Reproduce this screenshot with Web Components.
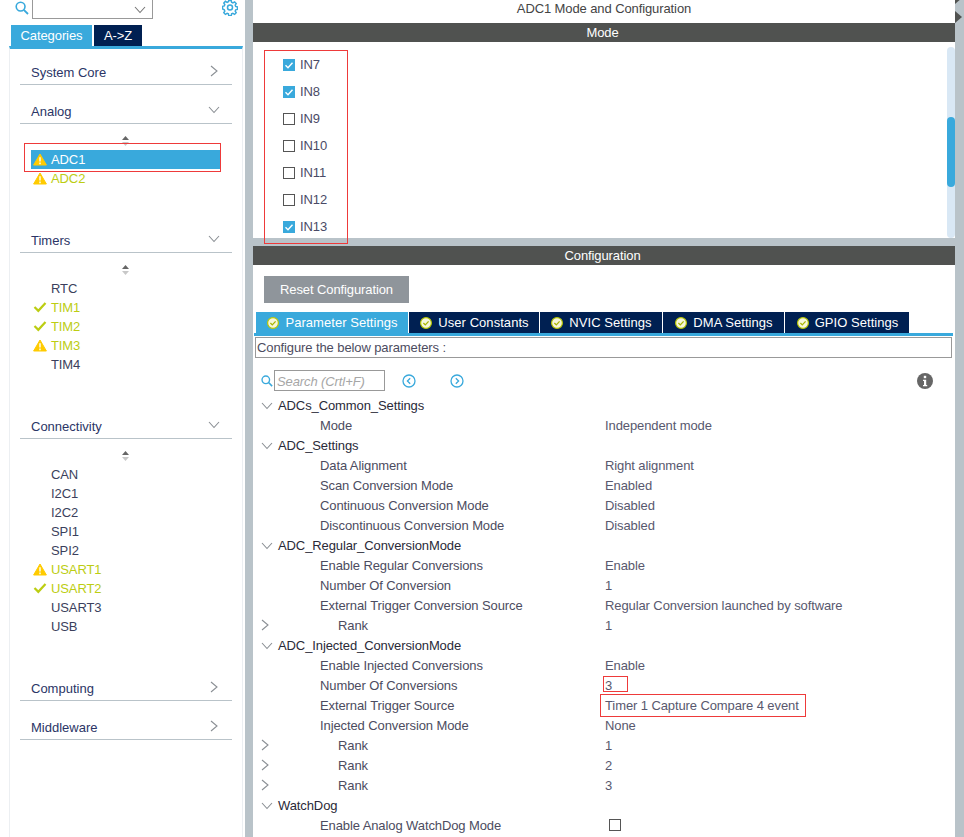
<!DOCTYPE html>
<html>
<head>
<meta charset="utf-8">
<title>ADC1 Mode and Configuration</title>
<style>
  html, body { margin: 0; height: 837px; overflow: hidden; background: #fff; }
  body { font: 13px/20px "Liberation Sans", Arial, sans-serif; letter-spacing: -0.1px; color: #444; }
</style>
</head>
<body>
<cube-app>
  <side-panel slot="side">
    <cat-header label="System Core"></cat-header>
    <cat-header label="Analog" open></cat-header>
    <cat-list>
      <periph-item state="warn" selected>ADC1</periph-item>
      <periph-item state="warn">ADC2</periph-item>
    </cat-list>
    <cat-header label="Timers" open></cat-header>
    <cat-list>
      <periph-item>RTC</periph-item>
      <periph-item state="ok">TIM1</periph-item>
      <periph-item state="ok">TIM2</periph-item>
      <periph-item state="warn">TIM3</periph-item>
      <periph-item>TIM4</periph-item>
    </cat-list>
    <cat-header label="Connectivity" open></cat-header>
    <cat-list>
      <periph-item>CAN</periph-item>
      <periph-item>I2C1</periph-item>
      <periph-item>I2C2</periph-item>
      <periph-item>SPI1</periph-item>
      <periph-item>SPI2</periph-item>
      <periph-item state="warn">USART1</periph-item>
      <periph-item state="ok">USART2</periph-item>
      <periph-item>USART3</periph-item>
      <periph-item>USB</periph-item>
    </cat-list>
    <cat-header label="Computing"></cat-header>
    <cat-header label="Middleware"></cat-header>
  </side-panel>

  <main-panel slot="main">
    <check-row slot="mode" checked>IN7</check-row>
    <check-row slot="mode" checked>IN8</check-row>
    <check-row slot="mode">IN9</check-row>
    <check-row slot="mode">IN10</check-row>
    <check-row slot="mode">IN11</check-row>
    <check-row slot="mode">IN12</check-row>
    <check-row slot="mode" checked>IN13</check-row>

    <tab-item slot="tabs" active width="152">Parameter Settings</tab-item>
    <tab-item slot="tabs" width="130">User Constants</tab-item>
    <tab-item slot="tabs" width="122">NVIC Settings</tab-item>
    <tab-item slot="tabs" width="121">DMA Settings</tab-item>
    <tab-item slot="tabs" width="124">GPIO Settings</tab-item>

    <param-row slot="params" kind="group" name="ADCs_Common_Settings"></param-row>
    <param-row slot="params" name="Mode" value="Independent mode"></param-row>
    <param-row slot="params" kind="group" name="ADC_Settings"></param-row>
    <param-row slot="params" name="Data Alignment" value="Right alignment"></param-row>
    <param-row slot="params" name="Scan Conversion Mode" value="Enabled"></param-row>
    <param-row slot="params" name="Continuous Conversion Mode" value="Disabled"></param-row>
    <param-row slot="params" name="Discontinuous Conversion Mode" value="Disabled"></param-row>
    <param-row slot="params" kind="group" name="ADC_Regular_ConversionMode"></param-row>
    <param-row slot="params" name="Enable Regular Conversions" value="Enable"></param-row>
    <param-row slot="params" name="Number Of Conversion" value="1"></param-row>
    <param-row slot="params" name="External Trigger Conversion Source" value="Regular Conversion launched by software"></param-row>
    <param-row slot="params" kind="rank" name="Rank" value="1"></param-row>
    <param-row slot="params" kind="group" name="ADC_Injected_ConversionMode"></param-row>
    <param-row slot="params" name="Enable Injected Conversions" value="Enable"></param-row>
    <param-row slot="params" name="Number Of Conversions" value="3"></param-row>
    <param-row slot="params" name="External Trigger Source" value="Timer 1 Capture Compare 4 event"></param-row>
    <param-row slot="params" name="Injected Conversion Mode" value="None"></param-row>
    <param-row slot="params" kind="rank" name="Rank" value="1"></param-row>
    <param-row slot="params" kind="rank" name="Rank" value="2"></param-row>
    <param-row slot="params" kind="rank" name="Rank" value="3"></param-row>
    <param-row slot="params" kind="group" name="WatchDog"></param-row>
    <param-row slot="params" name="Enable Analog WatchDog Mode" box></param-row>
  </main-panel>

  <!-- red boxes somebody drew on the screenshot -->
  <red-mark slot="marks" x="24" y="143" w="197" h="29"></red-mark>
  <red-mark slot="marks" x="264" y="50" w="84" h="194"></red-mark>
  <red-mark slot="marks" x="603" y="676" w="25" h="16"></red-mark>
  <red-mark slot="marks" x="600" y="694" w="206" h="23"></red-mark>
</cube-app>

<script>
const BLUE = '#39a9dc'
const NAVY = '#002052'
const LIME = '#bccd12'

const chevronRight = `<svg width="8" height="12" viewBox="0 0 8 12"><path d="M1 1l6 5-6 5" fill="none" stroke="#8a8f94" stroke-width="1.1"/></svg>`
const chevronDown = `<svg width="12" height="8" viewBox="0 0 12 8"><path d="M1 1l5 5.5L11 1" fill="none" stroke="#8a8f94" stroke-width="1.1"/></svg>`
const warnIcon = `<svg width="14" height="13" viewBox="0 0 14 13"><path d="M7 1L13.4 12H.6z" fill="#ffcb00" stroke="#ffcb00" stroke-width="1" stroke-linejoin="round"/><path d="M7 4.2v4.4M7 9.6v1.6" stroke="#fff" stroke-width="1.4"/></svg>`
const okIcon = `<svg width="14" height="12" viewBox="0 0 14 12"><path d="M1.5 6l3.8 3.8L12.5 2" fill="none" stroke="${LIME}" stroke-width="2.2"/></svg>`
const circleNav = dir => `<svg width="14" height="14" viewBox="0 0 14 14"><circle cx="7" cy="7" r="6" fill="none" stroke="${BLUE}" stroke-width="1.3"/><path d="${dir == 'l' ? 'M8.2 4.2L5.4 7l2.8 2.8' : 'M5.8 4.2L8.6 7l-2.8 2.8'}" fill="none" stroke="${BLUE}" stroke-width="1.3"/></svg>`
const searchIcon = size => `<svg width="${size}" height="${size}" viewBox="0 0 14 14"><circle cx="5.6" cy="5.6" r="4.4" fill="none" stroke="${BLUE}" stroke-width="1.6"/><path d="M8.8 8.8L13 13" stroke="${BLUE}" stroke-width="1.8"/></svg>`

// little helper so each component only declares its css and markup
class ShadowBase extends HTMLElement {
    render(html) {
        if (!this.shadowRoot) this.attachShadow({ mode: 'open' })
        this.shadowRoot.innerHTML = html
    }
}

/* whole window: left panel, grey splitter, main panel, grey gutter */
class CubeApp extends ShadowBase {
    connectedCallback() {
        this.render(`<style>
            :host { display: flex; width: 964px; height: 837px; position: relative; overflow: hidden; }
            .split { width: 8px; background: #b9c3c9; flex: none; }
            .gutter { width: 9px; background: #b9c3c9; flex: none; overflow: hidden; }
            .gutter i { display: block; width: 0; height: 0; margin-top: 7px; border-left: 7px solid #505250; border-top: 6.5px solid transparent; border-bottom: 6.5px solid transparent; }
            .gutter i:first-child { margin-top: -8px; }
            ::slotted([slot=side]) { width: 245px; flex: none; }
            ::slotted([slot=main]) { width: 702px; flex: none; }
        </style>
        <slot name="side"></slot>
        <div class="split"></div>
        <slot name="main"></slot>
        <div class="gutter"><i></i><i></i></div>
        <slot name="marks"></slot>`)
    }
}

class SidePanel extends ShadowBase {
    connectedCallback() {
        this.render(`<style>
            :host { display: block; height: 837px; overflow: hidden; }
            .search { height: 25px; display: flex; align-items: flex-start; position: relative; padding-left: 15px; box-sizing: border-box; }
            .search .mag { margin-top: 1px; height: 14px; }
            .combo { width: 119px; height: 18px; margin-left: 3px; border: 1px solid #999; border-top: 0; position: relative; }
            .combo svg { position: absolute; right: 6px; top: 6px; }
            .gear { position: absolute; left: 222px; top: 0; }
            .tabs { display: flex; gap: 2px; padding-left: 11px; height: 21px; }
            .tab { background: ${BLUE}; color: #fff; width: 81px; text-align: center; line-height: 21px; }
            .tab.dark { background: ${NAVY}; width: 48px; }
            .body { margin: 0 2px 0 9px; border-top: 3px solid ${BLUE}; border-left: 1px solid #eceff2; border-right: 1px solid #eceff2; height: 800px; box-sizing: border-box; padding: 0 10px; }
            .inner { margin-top: -3px; }
        </style>
        <div class="search">
            <span class="mag">${searchIcon(14)}</span>
            <div class="combo"><svg width="12" height="8" viewBox="0 0 12 8"><path d="M1 1l5 5.5L11 1" fill="none" stroke="#777" stroke-width="1.1"/></svg></div>
            <svg class="gear" width="16" height="16" viewBox="0 0 16 16"><path fill="none" stroke="${BLUE}" stroke-width="1.5" d="M6.8 1h2.4l.4 1.9 1.3.6 1.7-1 1.6 1.7-1 1.6.5 1.3 1.8.5v2.4l-1.8.4-.5 1.3 1 1.6-1.6 1.7-1.7-1-1.3.5-.4 1.9H6.8l-.4-1.9-1.3-.5-1.7 1-1.6-1.7 1-1.6-.5-1.3L.5 9.4V7l1.8-.5.5-1.3-1-1.6 1.6-1.7 1.7 1 1.3-.6z" transform="translate(0 -.6)"/><circle cx="8" cy="7.6" r="2.5" fill="none" stroke="${BLUE}" stroke-width="1.5"/></svg>
        </div>
        <div class="tabs"><div class="tab">Categories</div><div class="tab dark">A-&gt;Z</div></div>
        <div class="body"><div class="inner"><slot></slot></div></div>`)
    }
}

class CatHeader extends ShadowBase {
    connectedCallback() {
        const open = this.hasAttribute('open')
        this.render(`<style>
            :host { display: flex; justify-content: space-between; height: 39px; box-sizing: border-box; border-bottom: 1px solid #b9c3c9; padding: 17px 14px 0 11px; color: #2b3566; line-height: 20px; letter-spacing: 0; position: relative; }
            span { display: block; }
            svg { display: block; margin-top: ${open ? 4 : 2}px; margin-right: ${open ? -2 : 0}px; }
        </style><span>${this.getAttribute('label')}</span>${open ? chevronDown : chevronRight}`)
    }
}

class CatList extends ShadowBase {
    connectedCallback() {
        this.render(`<style>
            :host { display: block; padding-bottom: 26px; }
            .sort { height: 26px; box-sizing: border-box; padding: 12px 0 0 101px; }
            svg { display: block; }
        </style>
        <div class="sort"><svg width="9" height="11" viewBox="0 0 9 11"><path d="M4.5 0L8 4H1z" fill="#666"/><path d="M4.5 10L8 6H1z" fill="#c8c8c8"/></svg></div>
        <slot></slot>`)
    }
}

class PeriphItem extends ShadowBase {
    connectedCallback() {
        const state = this.getAttribute('state')
        const selected = this.hasAttribute('selected')
        const icon = state == 'warn' ? warnIcon : state == 'ok' ? okIcon : ''
        const color = selected ? '#fff' : state ? LIME : '#3b3f5c'
        this.render(`<style>
            :host { display: flex; align-items: center; height: 19px; padding-left: 2px; color: ${color}; background: ${selected ? BLUE : 'transparent'}; line-height: 19px; width: 187px; margin-left: 11px; }
            .ic { width: 18px; height: 13px; display: block; }
            svg { display: block; }
        </style><span class="ic">${icon}</span><slot></slot>`)
    }
}

class DarkBar extends ShadowBase {
    connectedCallback() {
        this.render(`<style>
            :host { display: block; height: 19px; background: #505250; color: #fff; text-align: center; line-height: 19px; padding-right: 3px; box-sizing: border-box; }
        </style><slot></slot>`)
    }
}

class CheckRow extends ShadowBase {
    connectedCallback() {
        const on = this.hasAttribute('checked')
        this.render(`<style>
            :host { display: flex; align-items: center; height: 27px; padding-left: 30px; color: #4a4a66; }
            .box { width: 12px; height: 12px; box-sizing: border-box; margin-right: 5px; border: 1px solid #555; display: block; }
            .box.on { background: ${BLUE}; border: 0; }
            svg { display: block; }
        </style><span class="box ${on ? 'on' : ''}">${on ? '<svg width="12" height="12" viewBox="0 0 12 12"><path d="M2.5 6.2l2.5 2.5 4.5-5" fill="none" stroke="#fff" stroke-width="1.4"/></svg>' : ''}</span><slot></slot>`)
    }
}

class TabItem extends ShadowBase {
    connectedCallback() {
        const active = this.hasAttribute('active')
        this.render(`<style>
            :host { display: flex; align-items: center; justify-content: center; gap: 6px; height: 21px; width: ${this.getAttribute('width')}px; box-sizing: border-box; background: ${active ? BLUE : NAVY}; color: #fff; letter-spacing: 0.05px; padding-left: 1px; }
            svg { display: block; flex: none; }
        </style><svg width="12" height="12" viewBox="0 0 12 12"><circle cx="6" cy="6" r="5.4" fill="#f6f6dc" stroke="#b9c800" stroke-width="1.2"/><path d="M3.4 6l1.9 1.9 3.3-3.5" fill="none" stroke="#a8b600" stroke-width="1.3"/></svg><slot></slot>`)
    }
}

class ParamRow extends ShadowBase {
    connectedCallback() {
        const kind = this.getAttribute('kind')
        const value = this.getAttribute('value') || ''
        const indent = kind == 'group' ? 25 : kind == 'rank' ? 85 : 67
        const arrow = kind == 'group' ? chevronDown : kind == 'rank' ? chevronRight : ''
        this.render(`<style>
            :host { display: flex; height: 20px; line-height: 22px; color: #4c4c60; position: relative; }
            .arrow { position: absolute; left: 8px; top: ${kind == 'group' ? 7 : 4}px; }
            .name { width: 352px; padding-left: ${indent}px; box-sizing: border-box; flex: none; color: ${kind == 'group' ? '#2a2a38' : '#4c4c60'}; white-space: nowrap; }
            .val { color: #58586e; white-space: nowrap; }
            .box { display: block; width: 12px; height: 12px; border: 1px solid #555; box-sizing: border-box; margin: 4px 0 0 4px; }
            svg { display: block; }
        </style><span class="arrow">${arrow}</span><span class="name">${this.getAttribute('name')}</span>${this.hasAttribute('box') ? '<span class="box"></span>' : `<span class="val">${value}</span>`}`)
    }
}

class MainPanel extends ShadowBase {
    connectedCallback() {
        this.render(`<style>
            :host { display: block; height: 837px; overflow: hidden; }
            .title { height: 23px; line-height: 17px; text-align: center; }
            .mode { height: 196px; display: flex; justify-content: space-between; }
            .checks { padding-top: 9px; }
            .scroll { width: 8px; height: 191px; margin-top: 5px; background: #d9e8f5; border-radius: 4px; overflow: hidden; }
            .scroll i { display: block; height: 70px; margin-top: 70px; background: ${BLUE}; border-radius: 4px; }
            .band { height: 8px; background: #b9c3c9; }
            .reset { width: 145px; height: 27px; margin: 11px 0 9px 11px; background: #8f959b; color: #fff; text-align: center; line-height: 27px; }
            .tabs { display: flex; gap: 1px; padding-left: 3px; }
            .line { height: 3px; background: ${BLUE}; margin: 0 2px 0 1px; }
            .hint { height: 21px; margin: 1px 3px 0 2px; border: 1px solid #999; box-sizing: border-box; line-height: 19px; padding-left: 1px; color: #4c4c60; white-space: nowrap; }
            .find { height: 37px; display: flex; align-items: center; position: relative; padding: 8px 0 0 8px; box-sizing: border-box; }
            .find .mag { height: 12px; margin-right: 1px; }
            .input { width: 111px; height: 21px; border: 1px solid #999; box-sizing: border-box; font-style: italic; color: #a6a6a6; line-height: 21px; padding-left: 2px; white-space: nowrap; }
            .nav { display: block; margin-left: 17px; height: 14px; }
            .nav + .nav { margin-left: 34px; }
            .info { position: absolute; left: 664px; top: 15px; }
            svg { display: block; }
        </style>
        <div class="title">ADC1 Mode and Configuration</div>
        <dark-bar>Mode</dark-bar>
        <div class="mode">
            <div class="checks"><slot name="mode"></slot></div>
            <div class="scroll"><i></i></div>
        </div>
        <div class="band"></div>
        <dark-bar>Configuration</dark-bar>
        <div class="reset">Reset Configuration</div>
        <div class="tabs"><slot name="tabs"></slot></div>
        <div class="line"></div>
        <div class="hint">Configure the below parameters :</div>
        <div class="find">
            <span class="mag">${searchIcon(12)}</span>
            <div class="input">Search (Crtl+F)</div>
            <span class="nav">${circleNav('l')}</span>
            <span class="nav">${circleNav('r')}</span>
            <svg class="info" width="16" height="16" viewBox="0 0 16 16"><circle cx="8" cy="8" r="8" fill="#666"/><rect x="6.8" y="2.8" width="2.4" height="2.4" fill="#fff"/><path d="M6 6.8h3.2V12h1v1.2H6V12h1V8H6z" fill="#fff"/></svg>
        </div>
        <slot name="params"></slot>`)
    }
}

// annotation rectangle, this one really sits on a free canvas
class RedMark extends ShadowBase {
    connectedCallback() {
        const a = n => this.getAttribute(n)
        this.render(`<style>
            :host { position: absolute; left: ${a('x')}px; top: ${a('y')}px; width: ${a('w')}px; height: ${a('h')}px; box-sizing: border-box; border: 1px solid #ee3a3a; pointer-events: none; }
        </style>`)
    }
}

customElements.define('dark-bar', DarkBar)
customElements.define('cat-header', CatHeader)
customElements.define('cat-list', CatList)
customElements.define('periph-item', PeriphItem)
customElements.define('check-row', CheckRow)
customElements.define('tab-item', TabItem)
customElements.define('param-row', ParamRow)
customElements.define('red-mark', RedMark)
customElements.define('side-panel', SidePanel)
customElements.define('main-panel', MainPanel)
customElements.define('cube-app', CubeApp)
</script>
</body>
</html>
